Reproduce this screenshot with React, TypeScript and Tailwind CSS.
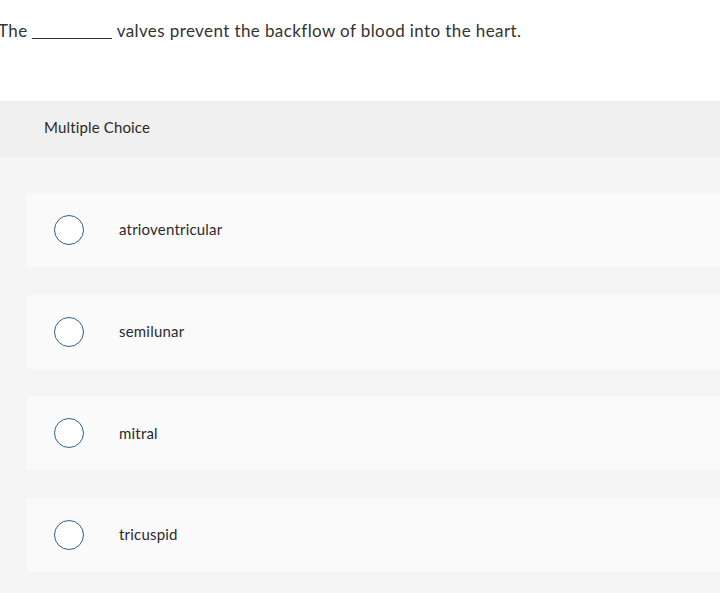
import React from "react";

const choices = ["atrioventricular", "semilunar", "mitral", "tricuspid"];

export default function App() {
  return (
    <div className="w-[720px] h-[593px] overflow-hidden bg-white text-[#333] font-['Lato',sans-serif]">
      {/* Question */}
      <div className="h-[101px] pt-[20px] -ml-[2px]">
        <p className="text-[17px] leading-[22px] tracking-[0.4px] whitespace-nowrap">
          The{" "}
          <span className="inline-block w-[80px] border-b border-[#333] align-baseline translate-y-[2px]" />{" "}
          valves prevent the backflow of blood into the heart.
        </p>
      </div>

      {/* Header */}
      <div className="h-[56px] bg-[#f0f0f0] flex items-center pl-[44px] pb-[3px]">
        <span className="text-[15px] tracking-[0.15px] text-[#2a2a2a]">Multiple Choice</span>
      </div>

      {/* Choices */}
      <div className="bg-[#f5f5f5] h-full pt-[36px] pl-[26px] flex flex-col gap-[27.7px]">
        {choices.map((c) => (
          <div key={c} className="h-[74px] bg-[#fafafa] rounded-l-[3px] flex items-center pl-[28px]">
            <span className="w-[30px] h-[30px] rounded-full border-[1.5px] border-[#2b5f91] bg-white shrink-0" />
            <span className="ml-[35px] pb-[1px] text-[15px] tracking-[0.2px] text-[#2a2a2a]">{c}</span>
          </div>
        ))}
      </div>
    </div>
  );
}
